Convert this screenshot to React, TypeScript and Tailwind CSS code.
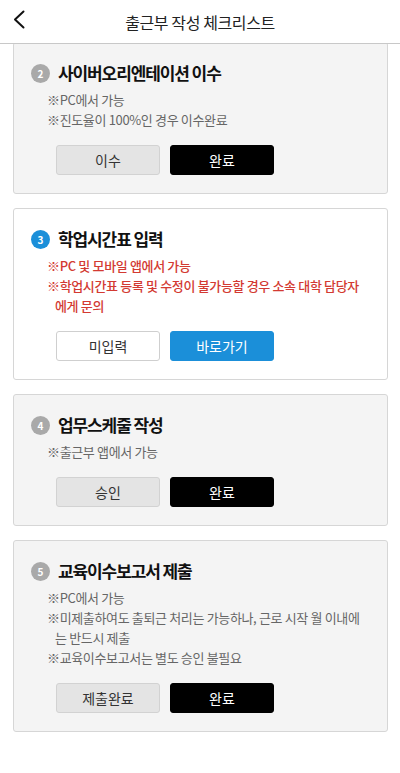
function Badge({ n, active }: { n: number; active?: boolean }) {
  return (
    <span
      className={
        "flex h-[19px] w-[19px] shrink-0 items-center justify-center rounded-full text-[10px] font-bold text-white " +
        (active ? "bg-[#1b8fd9]" : "bg-[#a9a9a9]")
      }
    >
      {n}
    </span>
  );
}

function Btn({ label, kind }: { label: string; kind: "gray" | "black" | "white" | "blue" }) {
  const styles = {
    gray: "bg-[#e4e4e4] border-[#d2d2d2] text-[#333]",
    black: "bg-black border-black text-white",
    white: "bg-white border-[#cfcfcf] text-[#333]",
    blue: "bg-[#1b8fd9] border-[#1b8fd9] text-white",
  }[kind];
  return (
    <button className={"flex h-[30px] w-[104px] items-center justify-center rounded-[3px] border text-[14px] " + styles}>
      {label}
    </button>
  );
}

type Card = {
  n: number;
  title: string;
  lines: string[];
  red?: boolean;
  active?: boolean;
  white?: boolean;
  buttons: [string, "gray" | "black" | "white" | "blue"][];
  first?: boolean;
};

const cards: Card[] = [
  {
    n: 2,
    title: "사이버오리엔테이션 이수",
    lines: ["※PC에서 가능", "※진도율이 100%인 경우 이수완료"],
    buttons: [["이수", "gray"], ["완료", "black"]],
    first: true,
  },
  {
    n: 3,
    title: "학업시간표 입력",
    lines: ["※PC 및 모바일 앱에서 가능", "※학업시간표 등록 및 수정이 불가능할 경우 소속 대학 담당자에게 문의"],
    red: true,
    active: true,
    white: true,
    buttons: [["미입력", "white"], ["바로가기", "blue"]],
  },
  {
    n: 4,
    title: "업무스케줄 작성",
    lines: ["※출근부 앱에서 가능"],
    buttons: [["승인", "gray"], ["완료", "black"]],
  },
  {
    n: 5,
    title: "교육이수보고서 제출",
    lines: [
      "※PC에서 가능",
      "※미제출하여도 출퇴근 처리는 가능하나, 근로 시작 월 이내에는 반드시 제출",
      "※교육이수보고서는 별도 승인 불필요",
    ],
    buttons: [["제출완료", "gray"], ["완료", "black"]],
  },
];

export default function App() {
  return (
    <div className="min-h-screen bg-white font-['Noto_Sans_CJK_KR',sans-serif] text-[#222]">
      {/* 헤더 */}
      <header className="relative z-10 flex h-[44px] items-center justify-center border-b border-[#c8c8c8] bg-white">
        <svg className="absolute left-[12px] top-[10px]" width="14" height="19" viewBox="0 0 14 19" fill="none">
          <path d="M11.5 1.5L3 9.5l8.5 8" stroke="#111" strokeWidth="2" strokeLinecap="round" strokeLinejoin="round" />
        </svg>
        <h1 className="text-[16px] tracking-[-0.4px] text-[#222]">출근부 작성 체크리스트</h1>
      </header>

      {/* 체크리스트 */}
      <main className="flex flex-col gap-[14px] pl-[13px] pr-[12px] pb-10">
        {cards.map((c) => (
          <section
            key={c.n}
            className={
              "rounded-[3px] border border-[#d6d6d6] pb-[18px] pt-[19px] " +
              (c.white ? "bg-white " : "bg-[#f4f4f4] ") +
              (c.first ? "-mt-[2px]" : "")
            }
          >
            <div className="flex h-[22px] items-center gap-[8px] pl-[17px]">
              <Badge n={c.n} active={c.active} />
              <h2 className="text-[17px] font-bold tracking-[-1.1px] text-[#111]">{c.title}</h2>
            </div>

            <div className="mt-[6px] pl-[33px] pr-[20px]">
              {c.lines.map((l, i) => (
                <p
                  key={i}
                  className={
                    "pl-[8px] indent-[-8px] text-[13px] leading-[20px] tracking-[-0.35px] " +
                    (c.red ? "font-medium text-[#d33a32]" : "text-[#666]")
                  }
                >
                  {l}
                </p>
              ))}
            </div>

            <div className="mt-[15px] flex gap-[10px] pl-[42px]">
              {c.buttons.map(([label, kind], i) => (
                <Btn key={i} label={label} kind={kind} />
              ))}
            </div>
          </section>
        ))}
      </main>
    </div>
  );
}
